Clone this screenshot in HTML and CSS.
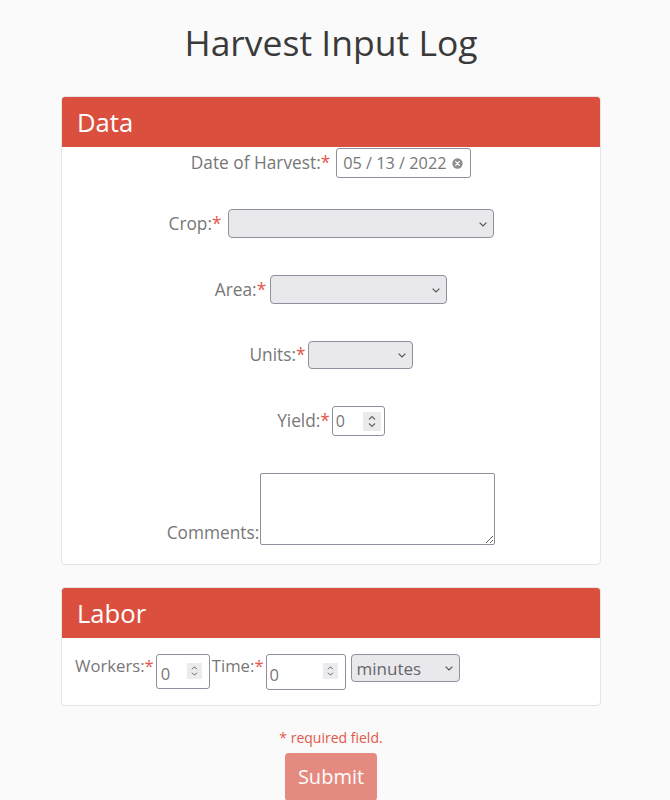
FILE: index.html
```html
<!DOCTYPE html>
<html lang="en">
<head>
<meta charset="utf-8">
<title>Harvest Input Log</title>
<link rel="stylesheet" href="styles.css">
</head>
<body>
<div class="page">
  <h1 class="title">Harvest Input Log</h1>

  <section class="card">
    <h2 class="card-header">Data</h2>
    <div class="card-body data-body">
      <div class="row row-date">
        <label class="label">Date of Harvest:<span class="req">*</span></label>
        <span class="field-wrap gap-wide">
          <input class="input date-input" type="text" value="05 / 13 / 2022">
          <svg class="clear-icon" viewBox="0 0 12 12"><circle cx="6" cy="6" r="5.6" fill="#8d8d8d"/><path d="M4 4 L8 8 M8 4 L4 8" stroke="#fff" stroke-width="1.4" stroke-linecap="round"/></svg>
        </span>
      </div>
      <div class="row">
        <label class="label">Crop:<span class="req">*</span></label>
        <span class="field-wrap gap-wide">
          <select class="select select-crop"><option></option></select>
          <svg class="chev" viewBox="0 0 8 5"><path d="M0.6 0.6 L4 4 L7.4 0.6" fill="none" stroke="#555" stroke-width="1.2"/></svg>
        </span>
      </div>
      <div class="row">
        <label class="label">Area:<span class="req">*</span></label>
        <span class="field-wrap gap-mid">
          <select class="select select-area"><option></option></select>
          <svg class="chev" viewBox="0 0 8 5"><path d="M0.6 0.6 L4 4 L7.4 0.6" fill="none" stroke="#555" stroke-width="1.2"/></svg>
        </span>
      </div>
      <div class="row">
        <label class="label">Units:<span class="req">*</span></label>
        <span class="field-wrap gap-narrow">
          <select class="select select-units"><option></option></select>
          <svg class="chev" viewBox="0 0 8 5"><path d="M0.6 0.6 L4 4 L7.4 0.6" fill="none" stroke="#555" stroke-width="1.2"/></svg>
        </span>
      </div>
      <div class="row">
        <label class="label">Yield:<span class="req">*</span></label>
        <span class="field-wrap gap-narrow">
          <input class="input num-input yield-input" type="number" value="0">
          <svg class="spin spin-yield" viewBox="0 0 18 19"><rect width="18" height="19" fill="#ebebed"/><path d="M6 7.5 L9 4.5 L12 7.5 M6 11.5 L9 14.5 L12 11.5" fill="none" stroke="#666" stroke-width="1.2"/></svg>
        </span>
      </div>
      <div class="row row-comments">
        <label class="label">Comments:</label>
        <textarea class="textarea"></textarea>
      </div>
    </div>
  </section>

  <section class="card">
    <h2 class="card-header">Labor</h2>
    <div class="card-body labor-body">
      <label class="label label-labor">Workers:<span class="req">*</span></label>
      <span class="field-wrap gap-narrow">
        <input class="input num-input labor-input workers-input" type="number" value="0">
        <svg class="spin spin-labor" viewBox="0 0 18 19"><rect width="18" height="19" fill="#ebebed"/><path d="M6 7.5 L9 4.5 L12 7.5 M6 11.5 L9 14.5 L12 11.5" fill="none" stroke="#666" stroke-width="1.2"/></svg>
      </span>
      <label class="label label-labor label-time">Time:<span class="req">*</span></label>
      <span class="field-wrap gap-narrow">
        <input class="input num-input labor-input time-input" type="number" value="0">
        <svg class="spin spin-labor" viewBox="0 0 18 19"><rect width="18" height="19" fill="#ebebed"/><path d="M6 7.5 L9 4.5 L12 7.5 M6 11.5 L9 14.5 L12 11.5" fill="none" stroke="#666" stroke-width="1.2"/></svg>
      </span>
      <span class="field-wrap gap-select">
        <select class="select select-minutes"><option>minutes</option><option>hours</option></select>
        <svg class="chev" viewBox="0 0 8 5"><path d="M0.6 0.6 L4 4 L7.4 0.6" fill="none" stroke="#555" stroke-width="1.2"/></svg>
      </span>
    </div>
  </section>

  <p class="required">* required field.</p>
  <div class="submit-row">
    <button class="submit" type="button" disabled>Submit</button>
  </div>
</div>
</body>
</html>
```

FILE: styles.css
```css
* {
  box-sizing: border-box;
}

body {
  margin: 0;
  background: #fafafa;
  font-family: "Open Sans", "Liberation Sans", sans-serif;
  color: #777;
}

.page {
  width: 662px;
}

.title {
  margin: 21px 0 32px;
  font-size: 35.5px;
  line-height: 43px;
  font-weight: 400;
  color: #3a3a3a;
  text-align: center;
}

.card {
  width: 540px;
  margin: 0 auto;
  background: #fff;
  border: 1px solid #e4e4e4;
  border-radius: 4px;
  overflow: hidden;
}

.card + .card {
  margin-top: 22px;
}

.card-header {
  margin: 0;
  height: 50px;
  padding: 10px 15px 0;
  font-size: 25.6px;
  line-height: 31px;
  font-weight: 400;
  color: #fff;
  background: #db4f3f;
}

.data-body {
  display: flex;
  flex-direction: column;
  gap: 37px;
  padding: 1px 0 19px;
}

.row {
  display: flex;
  justify-content: center;
  align-items: center;
}

.row-date {
  margin-bottom: -6px;
}

.row-comments {
  align-items: flex-end;
}

.label {
  font-size: 17.3px;
  line-height: 24px;
  color: #777;
  white-space: nowrap;
}

.label-labor {
  font-size: 16.7px;
}

.req {
  color: #e4574b;
}

.field-wrap {
  position: relative;
  display: inline-flex;
}

.gap-wide {
  margin-left: 6px;
}

.gap-mid {
  margin-left: 4px;
}

.gap-narrow {
  margin-left: 2px;
}

.gap-select {
  margin-left: 5px;
}

.input {
  margin: 0;
  font-family: "Open Sans", "Liberation Sans", sans-serif;
  font-size: 16px;
  color: #777;
  background: #fff;
  border: 1px solid #8f8f9d;
  border-radius: 3px;
  padding: 0 4px;
  outline: none;
}

.date-input {
  width: 135px;
  height: 30px;
  padding: 0 6px;
  font-size: 16.3px;
}

.clear-icon {
  position: absolute;
  right: 8px;
  top: 10px;
  width: 11px;
  height: 11px;
}

.num-input {
  -moz-appearance: textfield;
}

.num-input::-webkit-inner-spin-button,
.num-input::-webkit-outer-spin-button {
  -webkit-appearance: none;
  margin: 0;
}

.yield-input {
  width: 53px;
  height: 30px;
  padding: 0 3px;
}

.labor-input {
  padding: 4px 0 0 4px;
  font-size: 16.5px;
}

.workers-input {
  width: 54px;
  height: 35px;
}

.time-input {
  width: 80px;
  height: 36px;
  padding-left: 3px;
}

.spin {
  position: absolute;
  pointer-events: none;
}

.spin-yield {
  right: 4px;
  top: 6px;
  width: 18px;
  height: 19px;
}

.spin-labor {
  right: 8px;
  top: 8px;
  width: 15px;
  height: 18px;
}

.select {
  -webkit-appearance: none;
  appearance: none;
  margin: 0;
  font-family: "Open Sans", "Liberation Sans", sans-serif;
  font-size: 16px;
  color: #666;
  background: #e9e9ed;
  border: 1px solid #8f8f9d;
  border-radius: 4px;
  padding: 0 22px 0 5px;
  outline: none;
}

.chev {
  position: absolute;
  right: 7px;
  top: 50%;
  width: 8px;
  height: 5px;
  margin-top: -2px;
  pointer-events: none;
}

.select-crop {
  width: 266px;
  height: 29px;
}

.select-area {
  width: 177px;
  height: 29px;
}

.select-units {
  width: 105px;
  height: 28px;
}

.select-minutes {
  width: 109px;
  height: 28px;
  font-size: 17px;
}

.textarea {
  margin: 0 0 0 1px;
  width: 235px;
  height: 72px;
  border: 1px solid #8f8f9d;
  border-radius: 2px;
  background: #fff;
  font-family: "Open Sans", "Liberation Sans", sans-serif;
  font-size: 16px;
  outline: none;
}

.labor-body {
  display: flex;
  align-items: flex-start;
  padding: 16px 13px 15px;
}

.label-time {
  margin-left: 2px;
}

.required {
  margin: 21px 0 0;
  font-size: 14px;
  line-height: 21px;
  color: #e4574b;
  text-align: center;
}

.submit-row {
  display: flex;
  justify-content: center;
  margin-top: 5px;
}

.submit {
  width: 92px;
  padding: 9px 0;
  font-family: "Open Sans", "Liberation Sans", sans-serif;
  font-size: 20px;
  line-height: 30px;
  color: #fff;
  background: #db4f3f;
  opacity: 0.65;
  border: 0;
  border-radius: 4px;
}
```
